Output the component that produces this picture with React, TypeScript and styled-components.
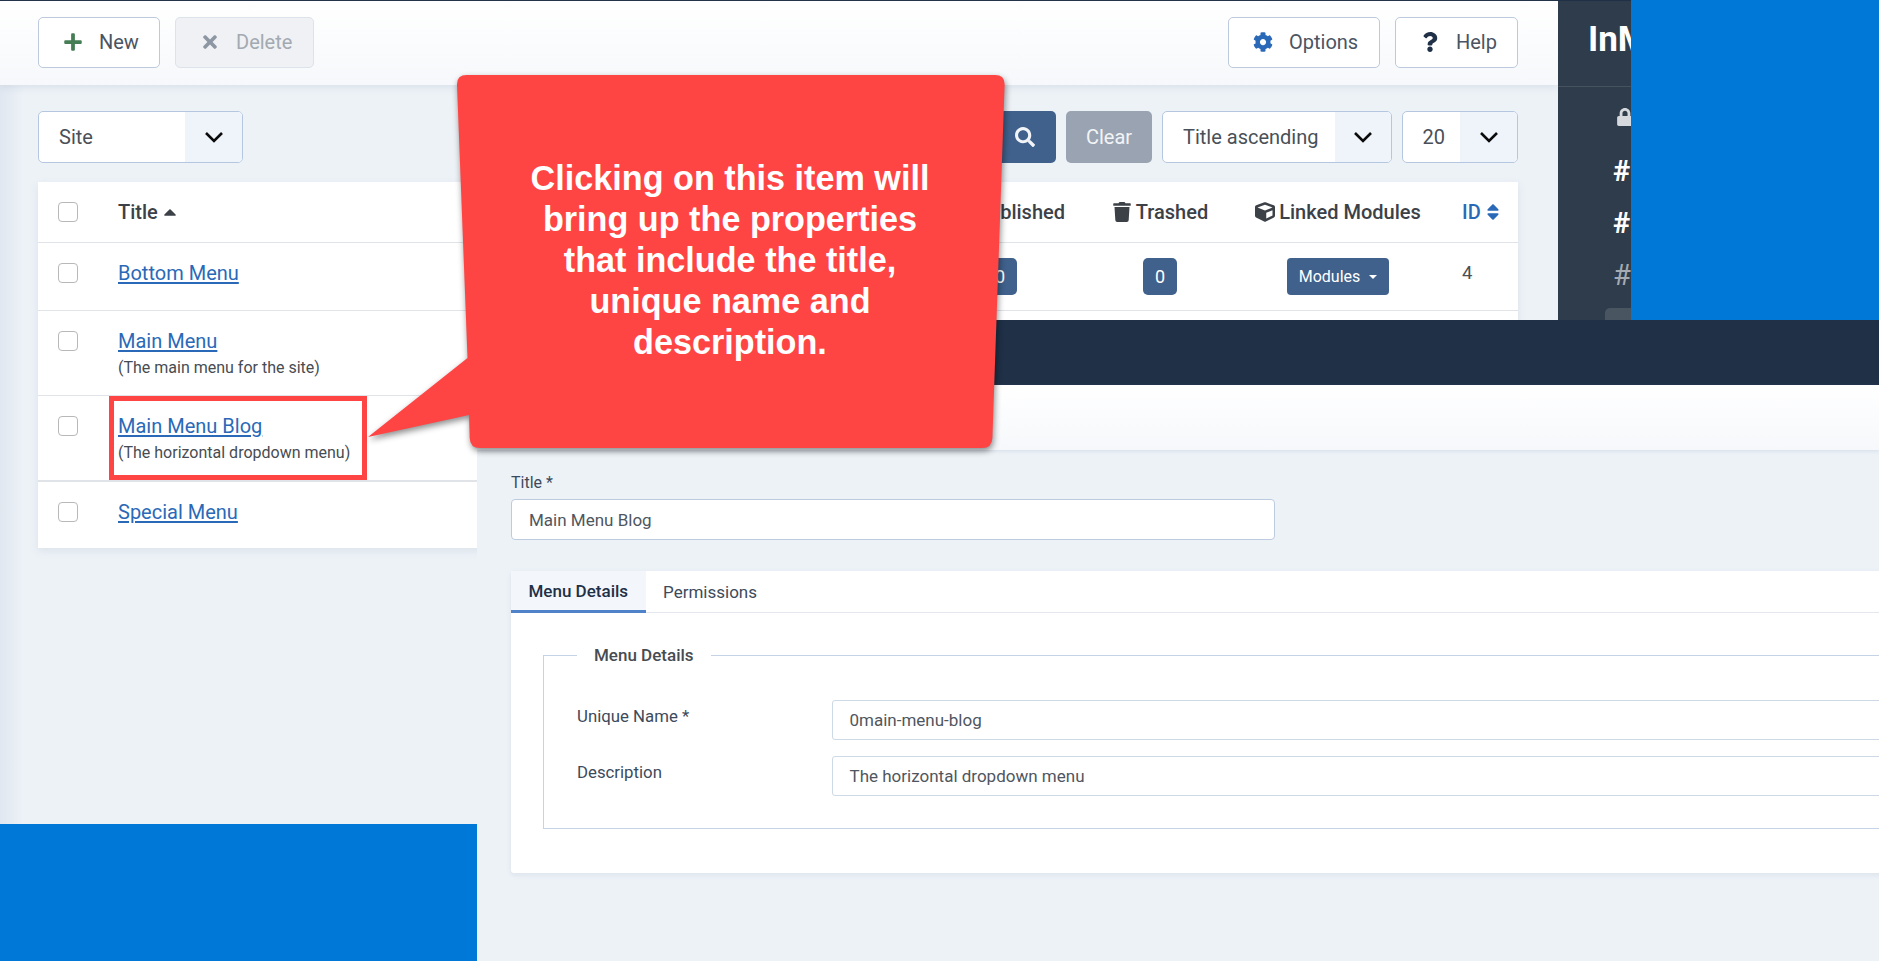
import styled, { createGlobalStyle } from 'styled-components';
import { FaCaretUp, FaCheck, FaCog, FaCube, FaLock, FaPlus, FaQuestion, FaSearch, FaSort, FaTimes, FaTrash } from 'react-icons/fa';

const GlobalStyle = createGlobalStyle`
  html, body {
    margin: 0;
    padding: 0;
    overflow: hidden;
    background: #edf2f7;
  }
  * { box-sizing: border-box; }
`;

const Page = styled.div`
  position: relative;
  width: 1879px;
  height: 961px;
  overflow: hidden;
  font-family: Roboto, "Liberation Sans", sans-serif;
  color: #495057;
  background: #edf2f7;
`;

/* the screenshot is a collage of windows, so the windows themselves sit on a canvas */
const TopWindow = styled.div`
  position: absolute;
  left: 0;
  top: 0;
  width: 1558px;
  height: 824px;
  background: #edf2f7;
  border-top: 1px solid #1f3047;

  &::before {
    content: '';
    position: absolute;
    left: 0;
    top: 0;
    bottom: 0;
    width: 24px;
    background: linear-gradient(90deg, #e0e7f0, rgba(237, 242, 247, 0));
  }
`;

const Toolbar = styled.div`
  height: 84px;
  padding: 16px 40px 0 38px;
  display: flex;
  align-items: flex-start;
  justify-content: space-between;
  background: linear-gradient(180deg, #fff, #f6f8fb);
  box-shadow: 0 2px 8px rgba(120, 140, 170, 0.18);
  position: relative;
`;

const ButtonGroup = styled.div<{ $gap: number }>`
  display: flex;
  gap: ${props => props.$gap}px;
`;

const ToolButton = styled.div<{ $width: number; $disabled?: boolean }>`
  width: ${props => props.$width}px;
  height: 51px;
  display: flex;
  align-items: center;
  padding: 0 0 2px 24px;
  font-size: 20px;
  border: 1px solid ${props => (props.$disabled ? '#dde3ea' : '#bdc9dc')};
  border-radius: 5px;
  background: ${props => (props.$disabled ? '#eff1f4' : '#fff')};
  color: ${props => (props.$disabled ? '#a3a9b1' : '#4a5462')};
`;

const ToolIcon = styled.span<{ $color: string; $size: number }>`
  display: inline-flex;
  width: 36px;
  color: ${props => props.$color};
  font-size: ${props => props.$size}px;
`;

const FilterRow = styled.div`
  position: relative;
  display: flex;
  justify-content: space-between;
  padding: 26px 40px 0 38px;
`;

const FilterRight = styled.div`
  display: flex;
  gap: 10px;
`;

const SelectBox = styled.div<{ $width: number; $arrow: number }>`
  width: ${props => props.$width}px;
  height: 52px;
  display: grid;
  grid-template-columns: 1fr ${props => props.$arrow}px;
  border: 1px solid #b5c7e0;
  border-radius: 5px;
  background: #fff;
  overflow: hidden;
  font-size: 20px;
`;

const SelectText = styled.div<{ $pad: number }>`
  display: flex;
  align-items: center;
  padding-left: ${props => props.$pad}px;
  white-space: nowrap;
`;

const SelectArrow = styled.div`
  display: flex;
  align-items: center;
  justify-content: center;
  background: #eff3fa;
`;

const FilterButton = styled.div<{ $width: number; $bg: string }>`
  width: ${props => props.$width}px;
  height: 52px;
  display: flex;
  align-items: center;
  justify-content: center;
  border-radius: 5px;
  font-size: 20px;
  color: #f2f4f7;
  background: ${props => props.$bg};
`;

const Table = styled.div`
  position: relative;
  margin: 19px 40px 0 38px;
  background: #fff;
  box-shadow: 0 3px 8px rgba(120, 140, 170, 0.15);
`;

const Row = styled.div<{ $height: number; $line?: number }>`
  height: ${props => props.$height}px;
  display: grid;
  grid-template-columns: 80px 812px 140px 180px 176px 92px;
  border-bottom: ${props => props.$line ?? 1}px solid #e0e3e7;
  &:last-child { border-bottom: 0; }
`;

const HeadCell = styled.div<{ $left?: boolean }>`
  display: flex;
  align-items: center;
  justify-content: ${props => (props.$left ? 'flex-start' : 'center')};
  gap: ${props => (props.$left ? 2 : 4)}px;
  font-size: 20px;
  font-weight: 500;
  color: #3c4148;
  white-space: nowrap;
`;

const PublishedHead = styled(HeadCell)`
  justify-content: flex-end;
  padding-right: 5px;
`;

const IdHead = styled(HeadCell)`
  padding-left: 36px;
  color: #2a69b8;
`;

const CheckCell = styled.div<{ $top: number }>`
  padding: ${props => props.$top}px 0 0 20px;
`;

const CheckBox = styled.div`
  width: 20px;
  height: 20px;
  border: 1px solid #b8b8b8;
  border-radius: 4px;
  background: #fff;
`;

const TitleCell = styled.div`
  padding-top: 18px;
`;

const ItemLink = styled.a`
  display: block;
  font-size: 20px;
  line-height: 24px;
  color: #2a69b8;
  text-decoration: underline;
  text-underline-offset: 2px;
`;

const ItemNote = styled.div`
  margin-top: 4px;
  font-size: 16px;
  line-height: 22px;
  color: #474c52;
`;

const CountCell = styled.div`
  padding-top: 15px;
  display: flex;
  justify-content: center;
`;

const Badge = styled.div`
  width: 34px;
  height: 37px;
  display: flex;
  align-items: center;
  justify-content: center;
  border-radius: 5px;
  font-size: 18px;
  color: #fff;
  background: #3f618c;
`;

const ModulesButton = styled.div`
  width: 102px;
  height: 37px;
  display: flex;
  align-items: center;
  justify-content: center;
  gap: 9px;
  border-radius: 4px;
  font-size: 16px;
  color: #fff;
  background: #3f618c;

  &::after {
    content: '';
    border-left: 4px solid transparent;
    border-right: 4px solid transparent;
    border-top: 4px solid #fff;
  }
`;

const IdCell = styled.div`
  padding: 18px 0 0 36px;
  font-size: 18.5px;
  line-height: 24px;
`;

const SideBar = styled.div`
  position: absolute;
  left: 1558px;
  top: 0;
  width: 73px;
  height: 320px;
  background: #2f3c4b;
  color: #fff;
  border-top: 1px solid #1f3047;
`;

const SideBrand = styled.div`
  height: 86px;
  padding: 18px 0 0 30px;
  font-size: 35px;
  line-height: 42px;
  font-weight: 700;
  white-space: nowrap;
  border-bottom: 1px solid #47525f;
`;

const SideItems = styled.div`
  padding: 21px 0 0 55px;
  display: flex;
  flex-direction: column;
  align-items: flex-start;
`;

const SideLock = styled.div`
  height: 20px;
  margin: 0 0 19px 3px;
  font-size: 18px;
  color: #d5d8dc;
`;

const SideHash = styled.div<{ $dim?: boolean }>`
  height: 52px;
  font-size: 29px;
  line-height: 48px;
  font-weight: ${props => (props.$dim ? 400 : 700)};
  color: ${props => (props.$dim ? '#a4abb3' : '#fff')};
`;

const SidePill = styled.div`
  position: absolute;
  left: 47px;
  top: 307px;
  width: 40px;
  height: 13px;
  border-radius: 5px 5px 0 0;
  background: #4a5562;
`;

const BlueBlock = styled.div<{ $left: number; $top: number; $width: number; $height: number }>`
  position: absolute;
  left: ${props => props.$left}px;
  top: ${props => props.$top}px;
  width: ${props => props.$width}px;
  height: ${props => props.$height}px;
  background: #0078d7;
`;

const BottomWindow = styled.div`
  position: absolute;
  left: 477px;
  top: 320px;
  width: 1402px;
  height: 641px;
  overflow: hidden;
  background: #edf2f7;
`;

const DarkBar = styled.div`
  height: 65px;
  background: #1f3047;
`;

const SubToolbar = styled.div`
  height: 65px;
  background: linear-gradient(180deg, #fff, #f6f8fb);
  box-shadow: 0 1px 4px rgba(120, 140, 170, 0.2);
`;

const FormArea = styled.div`
  padding: 23px 0 0 34px;
`;

const TitleLabel = styled.div`
  font-size: 16px;
  line-height: 20px;
  color: #3d4a5c;
`;

const TitleInput = styled.div`
  width: 764px;
  height: 41px;
  margin-top: 6px;
  display: flex;
  align-items: center;
  padding-left: 17px;
  font-size: 17px;
  color: #4f5660;
  background: #fff;
  border: 1px solid #bccbe0;
  border-radius: 4px;
`;

const Card = styled.div`
  width: 1500px;
  height: 302px;
  margin-top: 31px;
  background: #fff;
  border-radius: 3px;
  box-shadow: 0 2px 5px rgba(120, 140, 170, 0.15);
`;

const TabBar = styled.div`
  height: 42px;
  display: flex;
  border-bottom: 1px solid #e4e8ee;
`;

const Tab = styled.div<{ $active?: boolean }>`
  height: 42px;
  display: flex;
  align-items: center;
  padding: 0 17.5px;
  font-size: 17px;
  font-weight: ${props => (props.$active ? 500 : 400)};
  color: ${props => (props.$active ? '#1f3047' : '#3d4a5c')};
  background: ${props => (props.$active ? '#f3f6fa' : 'transparent')};
  border-bottom: ${props => (props.$active ? '3px solid #4f82c9' : '0')};
`;

const Fieldset = styled.fieldset`
  width: 1500px;
  height: 183px;
  margin: 33px 0 0 32px;
  padding: 35px 0 0 33px;
  border: 1px solid #c5d3e6;
  border-radius: 0;
`;

const Legend = styled.legend`
  margin-left: 0;
  padding: 0 17px;
  font-size: 17px;
  line-height: 19px;
  font-weight: 500;
  color: #474c52;
`;

const FieldRow = styled.div`
  display: grid;
  grid-template-columns: 254.5px 1200px;
  margin-bottom: 16px;
`;

const RowLabel = styled.div`
  padding-top: 6px;
  font-size: 16.8px;
  line-height: 20px;
  color: #3d4a5c;
`;

const RowInput = styled.div`
  height: 40px;
  display: flex;
  align-items: center;
  padding-left: 17px;
  font-size: 17px;
  color: #4f5660;
  border: 1px solid #ced9e8;
  border-radius: 3px;
`;

const Highlight = styled.div`
  position: absolute;
  left: 109px;
  top: 396px;
  width: 258px;
  height: 84px;
  border: 5px solid #ff4444;
`;

const CalloutShape = styled.svg`
  position: absolute;
  left: 360px;
  top: 70px;
  filter: drop-shadow(1px 3px 3px rgba(0, 0, 0, 0.45));
`;

const CalloutText = styled.div`
  position: absolute;
  left: 480px;
  top: 158px;
  width: 500px;
  text-align: center;
  font-family: "Liberation Sans", Arial, sans-serif;
  font-size: 34.2px;
  line-height: 41px;
  font-weight: 700;
  color: #fff;
`;

const Chevron = () => (
  <svg width="20" height="12" viewBox="0 0 20 12" fill="none">
    <path d="M2 2l8 8 8-8" stroke="#0b0b0b" strokeWidth="2.6" />
  </svg>
);

const rows = [
  { title: 'Bottom Menu', height: 68, top: 20, counts: true },
  { title: 'Main Menu', note: '(The main menu for the site)', height: 85, top: 20 },
  { title: 'Main Menu Blog', note: '(The horizontal dropdown menu)', height: 86, top: 20, line: 2 },
  { title: 'Special Menu', height: 66, top: 20 },
];

export default function App() {
  return (
    <Page>
      <GlobalStyle />

      <TopWindow>
        <Toolbar>
          <ButtonGroup $gap={15}>
            <ToolButton $width={122}>
              <ToolIcon $color="#457d54" $size={20}><FaPlus /></ToolIcon>
              New
            </ToolButton>
            <ToolButton $width={139} $disabled>
              <ToolIcon $color="#8d97a3" $size={20}><FaTimes /></ToolIcon>
              Delete
            </ToolButton>
          </ButtonGroup>
          <ButtonGroup $gap={15}>
            <ToolButton $width={152}>
              <ToolIcon $color="#2a69b8" $size={20}><FaCog /></ToolIcon>
              Options
            </ToolButton>
            <ToolButton $width={123}>
              <ToolIcon $color="#1f3047" $size={20}><FaQuestion /></ToolIcon>
              Help
            </ToolButton>
          </ButtonGroup>
        </Toolbar>

        <FilterRow>
          <SelectBox $width={205} $arrow={57}>
            <SelectText $pad={20}>Site</SelectText>
            <SelectArrow><Chevron /></SelectArrow>
          </SelectBox>
          <FilterRight>
            <FilterButton $width={62} $bg="#3f618c"><FaSearch /></FilterButton>
            <FilterButton $width={86} $bg="#9aa3b1">Clear</FilterButton>
            <SelectBox $width={229.5} $arrow={56}>
              <SelectText $pad={20}>Title ascending</SelectText>
              <SelectArrow><Chevron /></SelectArrow>
            </SelectBox>
            <SelectBox $width={116.5} $arrow={57}>
              <SelectText $pad={20}>20</SelectText>
              <SelectArrow><Chevron /></SelectArrow>
            </SelectBox>
          </FilterRight>
        </FilterRow>

        <Table>
          <Row $height={61}>
            <CheckCell $top={20}><CheckBox /></CheckCell>
            <HeadCell $left>Title <FaCaretUp /></HeadCell>
            <PublishedHead><FaCheck />Published</PublishedHead>
            <HeadCell><FaTrash />Trashed</HeadCell>
            <HeadCell><FaCube />Linked Modules</HeadCell>
            <IdHead $left>ID <FaSort /></IdHead>
          </Row>
          {rows.map(row => (
            <Row key={row.title} $height={row.height} $line={row.line}>
              <CheckCell $top={row.top}><CheckBox /></CheckCell>
              <TitleCell>
                <ItemLink>{row.title}</ItemLink>
                {row.note && <ItemNote>{row.note}</ItemNote>}
              </TitleCell>
              {row.counts && (
                <>
                  <CountCell><Badge>0</Badge></CountCell>
                  <CountCell><Badge>0</Badge></CountCell>
                  <CountCell><ModulesButton>Modules</ModulesButton></CountCell>
                  <IdCell>4</IdCell>
                </>
              )}
            </Row>
          ))}
        </Table>
      </TopWindow>

      <SideBar>
        <SideBrand>InMotion</SideBrand>
        <SideItems>
          <SideLock><FaLock /></SideLock>
          <SideHash>#</SideHash>
          <SideHash>#</SideHash>
          <SideHash $dim>#</SideHash>
        </SideItems>
        <SidePill />
      </SideBar>

      <BlueBlock $left={1631} $top={0} $width={248} $height={320} />
      <BlueBlock $left={0} $top={824} $width={477} $height={137} />

      <BottomWindow>
        <DarkBar />
        <SubToolbar />
        <FormArea>
          <TitleLabel>Title *</TitleLabel>
          <TitleInput>Main Menu Blog</TitleInput>
          <Card>
            <TabBar>
              <Tab $active>Menu Details</Tab>
              <Tab>Permissions</Tab>
            </TabBar>
            <Fieldset>
              <Legend>Menu Details</Legend>
              <FieldRow>
                <RowLabel>Unique Name *</RowLabel>
                <RowInput>0main-menu-blog</RowInput>
              </FieldRow>
              <FieldRow>
                <RowLabel>Description</RowLabel>
                <RowInput>The horizontal dropdown menu</RowInput>
              </FieldRow>
            </Fieldset>
          </Card>
        </FormArea>
      </BottomWindow>

      <Highlight />

      <CalloutShape width="660" height="390" viewBox="0 0 660 390">
        <path
          d="M106.6 5H635Q645 5 644.6 15L632.4 368Q632 378 622 378H120Q110 378 109.7 368L109 345L8 367L107.5 288L97 15Q96.6 5 106.6 5Z"
          fill="#ff4444"
        />
      </CalloutShape>
      <CalloutText>
        Clicking on this item will<br />
        bring up the properties<br />
        that include the title,<br />
        unique name and<br />
        description.
      </CalloutText>
    </Page>
  );
}
